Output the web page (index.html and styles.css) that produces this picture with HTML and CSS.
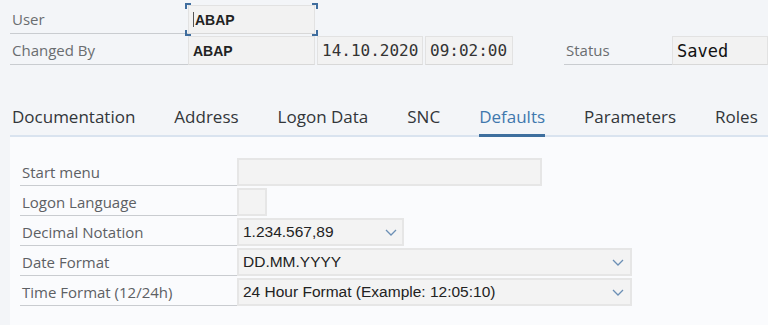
FILE: index.html
```html
<!doctype html>
<html>

<head>
	<title>Maintain User</title>
	<link rel="stylesheet" href="styles.css">
</head>

<body>
	<!-- header fields -->
	<div class="head">
		<div class="head-row">
			<div class="lbl">User</div>
			<div class="fld fld-user focus">
				<span class="caret"></span>ABAP
				<i class="cn tl"></i><i class="cn tr"></i><i class="cn bl"></i><i class="cn br"></i>
			</div>
		</div>
		<div class="head-row">
			<div class="lbl">Changed By</div>
			<div class="fld fld-user">ABAP</div>
			<div class="fld fld-date mono">14.10.2020</div>
			<div class="fld fld-time mono">09:02:00</div>
			<div class="lbl lbl-status">Status</div>
			<div class="fld fld-status">Saved</div>
		</div>
	</div>

	<!-- tab strip -->
	<div class="tabs">
		<div class="tab">Documentation</div>
		<div class="tab">Address</div>
		<div class="tab">Logon Data</div>
		<div class="tab">SNC</div>
		<div class="tab active">Defaults</div>
		<div class="tab">Parameters</div>
		<div class="tab">Roles</div>
	</div>

	<!-- defaults panel -->
	<div class="panel">
		<div class="form-row">
			<div class="flbl">Start menu</div>
			<div class="inp inp-menu"></div>
		</div>
		<div class="form-row">
			<div class="flbl">Logon Language</div>
			<div class="inp inp-lang"></div>
		</div>
		<div class="form-row">
			<div class="flbl">Decimal Notation</div>
			<div class="inp sel sel-short">1.234.567,89
				<svg class="chev" width="12" height="7" viewBox="0 0 12 7"><polyline points="1,1 6,6 11,1" /></svg>
			</div>
		</div>
		<div class="form-row">
			<div class="flbl">Date Format</div>
			<div class="inp sel sel-long">DD.MM.YYYY
				<svg class="chev" width="12" height="7" viewBox="0 0 12 7"><polyline points="1,1 6,6 11,1" /></svg>
			</div>
		</div>
		<div class="form-row">
			<div class="flbl">Time Format (12/24h)</div>
			<div class="inp sel sel-long">24 Hour Format (Example: 12:05:10)
				<svg class="chev" width="12" height="7" viewBox="0 0 12 7"><polyline points="1,1 6,6 11,1" /></svg>
			</div>
		</div>
	</div>
</body>

</html>
```

FILE: styles.css
```css
* { margin: 0; padding: 0; box-sizing: border-box; }
body { width: 768px; height: 325px; overflow: hidden; background-color: #f3f5f8; font-family: 'Open Sans', Arial, sans-serif; color: #32363a; }
.head { padding: 5px 0 0 10px; display: flex; flex-direction: column; gap: 2px; }
.head-row { display: flex; align-items: stretch; height: 29px; }
.lbl { width: 178px; font-size: 15px; color: #6a6d70; padding-left: 2px; border-bottom: 1px solid #c9ccd0; display: flex; align-items: center; }
.lbl-status { width: 108px; margin-left: 51px; }
.fld { background-color: #f2f2f2; border: 1px solid #e2e2e2; border-bottom-color: #d8d8d8; display: flex; align-items: center; padding-left: 4px; font-family: 'Liberation Sans', Arial, sans-serif; font-size: 14px; font-weight: bold; color: #222; position: relative; }
.fld-user { width: 127px; }
.fld-date { width: 106px; margin-left: 2px; }
.fld-time { width: 88px; margin-left: 2px; }
.fld-status { flex: 1; font-family: 'DejaVu Sans Mono', monospace; font-size: 17px; font-weight: normal; color: #111; }
.mono { font-family: 'DejaVu Sans Mono', monospace; font-weight: normal; font-size: 16px; color: #333; }
.caret { width: 1px; height: 15px; background-color: #555; margin-right: 1px; }
.cn { position: absolute; width: 6px; height: 6px; border-color: #3f6d9e; border-style: solid; border-width: 0; }
.tl { left: -4px; top: -3px; border-left-width: 2px; border-top-width: 2px; }
.tr { right: -4px; top: -3px; border-right-width: 2px; border-top-width: 2px; }
.bl { left: -4px; bottom: -3px; border-left-width: 2px; border-bottom-width: 2px; }
.br { right: -4px; bottom: -3px; border-right-width: 2px; border-bottom-width: 2px; }
.tabs { margin: 37px 0 0 10px; display: flex; gap: 39px; padding-left: 2px; border-bottom: 2px solid #d9e3ef; height: 35px; }
.tab { font-size: 17px; color: #32363a; padding-top: 3px; }
.tab.active { color: #3f78ad; border-bottom: 3px solid #3e6f9e; margin-bottom: -2px; }
.panel { margin-left: 10px; height: 200px; background-color: #fafbfd; padding: 21px 0 0 10px; display: flex; flex-direction: column; gap: 2px; }
.form-row { display: flex; height: 28px; }
.flbl { width: 217px; font-size: 15px; color: #5d6064; padding-left: 2px; border-bottom: 1px solid #c9ccd0; display: flex; align-items: center; }
.inp { background-color: #f3f3f3; border: 2px solid #e6e6e6; display: flex; align-items: center; padding-left: 4px; font-family: 'Liberation Sans', Arial, sans-serif; font-size: 15.5px; color: #222; }
.inp-menu { width: 305px; }
.inp-lang { width: 30px; }
.sel { justify-content: space-between; padding-right: 5px; }
.sel-long { padding-right: 6px; }
.sel-short { width: 167px; }
.sel-long { width: 395px; }
.chev { fill: none; stroke: #6b8fb5; stroke-width: 1.3; }
```
